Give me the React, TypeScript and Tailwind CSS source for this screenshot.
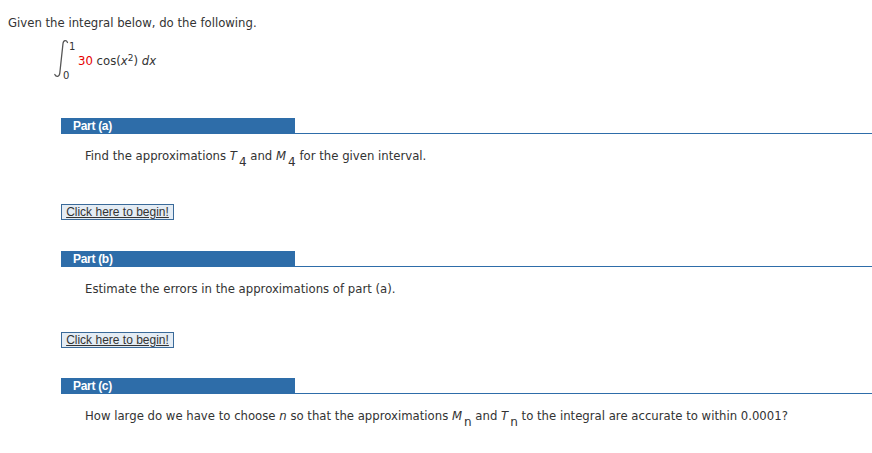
import React from "react";

function Sub({ v, s }: { v: string; s: string }) {
  return (
    <span className="inline-flex items-baseline">
      <i>{v}</i>
      <span className="relative top-[6px] ml-[2px] text-[12px] not-italic">{s}</span>
    </span>
  );
}

function PartHeader({ label }: { label: string }) {
  return (
    <div className="ml-[61px] flex items-end">
      <div className="h-[16px] w-[234px] bg-[#2e6da9] pl-[12px] font-['Liberation_Sans',sans-serif] text-[12px] font-bold leading-[16px] text-white tracking-[-0.3px]">
        {label}
      </div>
      <div className="flex-1 border-b border-[#2e6da9]" />
    </div>
  );
}

function BeginButton() {
  return (
    <div className="ml-[61px] flex">
      <button className="h-[16px] w-[113px] border border-[#3a6a99] bg-[#e4ecf4] font-['Liberation_Sans',sans-serif] text-[12px] leading-[14px] text-[#333] underline">
        Click here to begin!
      </button>
    </div>
  );
}

export default function App() {
  return (
    <div className="min-h-screen bg-white font-['DejaVu_Sans',sans-serif] text-[11.7px] text-[#333]">
      <div className="pl-[8px] pt-[15px] leading-[16px]">Given the integral below, do the following.</div>

      <div className="ml-[52px] mt-[8px] flex h-[40px] items-center">
        <div className="relative h-[40px] w-[26px]">
          {/* integral sign */}
          <svg className="absolute left-[1px] top-[0px]" width="16" height="39" viewBox="0 0 16 39">
            <path
              d="M14.5 3.5 C13.5 1 10.5 0.8 10 4.5 L6.8 34 C6.3 38 3.2 38.3 1.8 35.5"
              fill="none"
              stroke="#555"
              strokeWidth="1.3"
              strokeLinecap="round"
            />
          </svg>
          <span className="absolute left-[17px] top-[2px] text-[10px] leading-[12px]">1</span>
          <span className="absolute left-[11px] top-[31px] text-[10px] leading-[12px]">0</span>
        </div>
        <span className="mt-[6px]">
          <span className="text-[#e60000]">30</span> cos(<i>x</i>
          <sup className="text-[9px]">2</sup>) <i>dx</i>
        </span>
      </div>

      <div className="mt-[39px]">
        <PartHeader label="Part (a)" />
        <div className="ml-[85px] mt-[14px] leading-[16px]">
          Find the approximations <Sub v="T" s="4" /> and <Sub v="M" s="4" /> for the given interval.
        </div>
        <div className="mt-[40px]">
          <BeginButton />
        </div>
      </div>

      <div className="mt-[31px]">
        <PartHeader label="Part (b)" />
        <div className="ml-[85px] mt-[14px] leading-[16px]">Estimate the errors in the approximations of part (a).</div>
        <div className="mt-[35px]">
          <BeginButton />
        </div>
      </div>

      <div className="mt-[30px]">
        <PartHeader label="Part (c)" />
        <div className="ml-[85px] mt-[14px] leading-[16px]">
          How large do we have to choose <i>n</i> so that the approximations <Sub v="M" s="n" /> and{" "}
          <Sub v="T" s="n" /> to the integral are accurate to within 0.0001?
        </div>
      </div>
    </div>
  );
}
